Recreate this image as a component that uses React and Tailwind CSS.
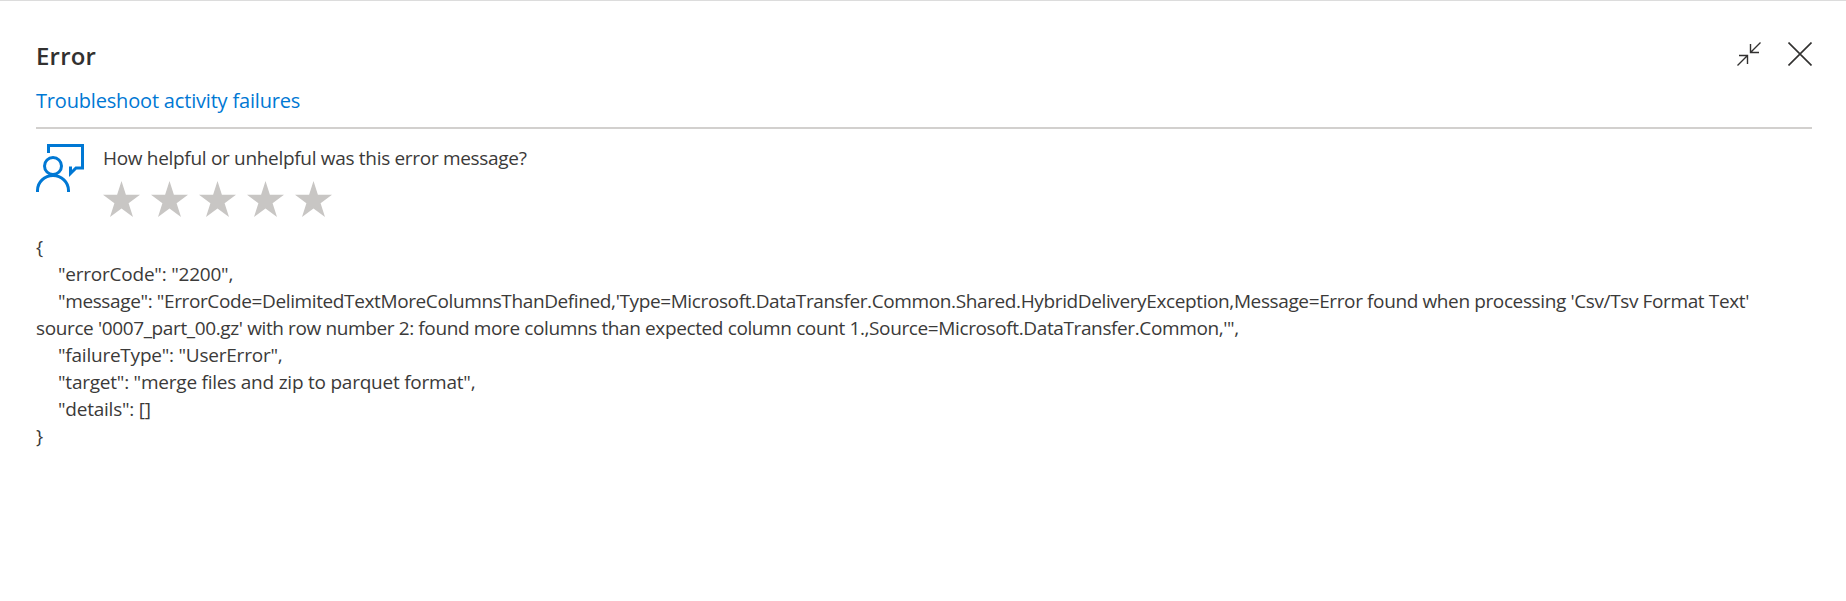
const Star = () => (
  <svg className="w-[37px] h-[36px] text-[#c8c6c4]" viewBox="0 0 37 36" fill="currentColor">
    <path d="M18.5 0l4.4 13.7H37L25.6 22.2 30 36 18.5 27.5 7 36l4.4-13.8L0 13.7h14.1z" />
  </svg>
);

const FeedbackIcon = () => (
  <svg className="w-[48px] h-[48px] text-[#0078d4] shrink-0" viewBox="0 0 48 48" fill="none" stroke="currentColor" strokeWidth={3}>
    <path d="M12.5 9V1.5H46.5V24H40L34.5 29.5V22.5" />
    <circle cx="17" cy="22" r="8.5" />
    <path d="M1.5 48V46.5C1.5 38 8.5 31.5 17 31.5S32.5 38 32.5 46.5V48" />
  </svg>
);

const CompressIcon = () => (
  <svg className="w-[24px] h-[24px] text-[#323130]" viewBox="0 0 24 24" fill="none" stroke="currentColor" strokeWidth={1.4}>
    <path d="M23.5 0.5L13.5 10.5M13.5 2V10.5H22M0.5 23.5L10.5 13.5M2 13.5H10.5V22" />
  </svg>
);

const CloseIcon = () => (
  <svg className="w-[24px] h-[24px] text-[#323130]" viewBox="0 0 24 24" fill="none" stroke="currentColor" strokeWidth={1.6}>
    <path d="M0.5 0.5L23.5 23.5M23.5 0.5L0.5 23.5" />
  </svg>
);

const Indent = () => <span className="inline-block w-[22px]" />;

const App = () => {
  return (
    <div className="w-[1846px] h-[601px] bg-white border-t-[1px] border-[#dcdcdc] pl-[36px] pr-[34px] pt-[41px] text-[#3b3a39] overflow-hidden font-['Open_Sans',sans-serif]">
      {/* Header */}
      <div className="flex justify-between h-[28px]">
        <h1 className="text-[24px] leading-[28px] font-semibold tracking-[0.2px] text-[#323130]">Error</h1>
        <div className="flex gap-[27px]">
          <CompressIcon />
          <CloseIcon />
        </div>
      </div>
      <a className="block mt-[16px] text-[20px] leading-[29px] text-[#0078d4] tracking-[-0.18px]">Troubleshoot activity failures</a>
      <div className="mt-[12px] border-t-[2px] border-[#d2d0ce]" />

      {/* Feedback */}
      <div className="flex mt-[15px] gap-[19px]">
        <FeedbackIcon />
        <div>
          <p className="text-[19px] leading-[28px] tracking-[-0.31px]">How helpful or unhelpful was this error message?</p>
          <div className="flex gap-[11px] mt-[9px]">
            <Star />
            <Star />
            <Star />
            <Star />
            <Star />
          </div>
        </div>
      </div>

      {/* Error details */}
      <div className="mt-[17px] text-[19px] leading-[27px] tracking-[-0.23px]">
        <p>{'{'}</p>
        <p><Indent />"errorCode": "2200",</p>
        <p className="pr-[20px] tracking-[-0.38px]"><Indent />"message": "ErrorCode=DelimitedTextMoreColumnsThanDefined,'Type=Microsoft.DataTransfer.Common.Shared.HybridDeliveryException,Message=Error found when processing 'Csv/Tsv Format Text' source '0007_part_00.gz' with row number 2: found more columns than expected column count 1.,Source=Microsoft.DataTransfer.Common,'",</p>
        <p><Indent />"failureType": "UserError",</p>
        <p><Indent />"target": "merge files and zip to parquet format",</p>
        <p><Indent />"details": []</p>
        <p>{'}'}</p>
      </div>
    </div>
  );
};

export default App;
